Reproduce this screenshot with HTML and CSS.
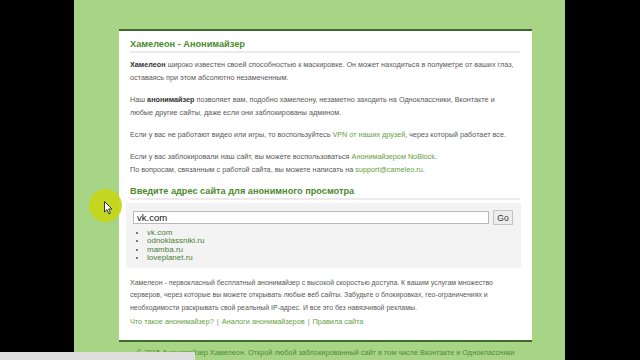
FILE: index.html
```html
<!DOCTYPE html>
<html lang="ru">
<head>
    <meta charset="UTF-8">
    <meta name="viewport" content="width=device-width, initial-scale=1.0">
    <title>Хамелеон - Анонимайзер</title>
    <link rel="stylesheet" href="styles.css">
</head>
<body>
    <div id="frame">
        <div id="page">
            <div class="hd">Хамелеон - Анонимайзер</div>
            <p class="txt"><b>Хамелеон</b> широко известен своей способностью к маскировке. Он может находиться в полуметре от ваших глаз,<br>оставаясь при этом абсолютно незамеченным.</p>
            <p class="txt">Наш <b>анонимайзер</b> позволяет вам, подобно хамелеону, незаметно заходить на Одноклассники, Вконтакте и<br>любые другие сайты, даже если они заблокированы админом.</p>
            <p class="txt">Если у вас не работают видео или игры, то воспользуйтесь <a href="#">VPN от наших друзей</a>, через который работает все.</p>
            <p class="txt">Если у вас заблокировали наш сайт, вы можете воспользоваться <a href="#">Анонимайзером NoBlock</a>.<br>По вопросам, связанным с работой сайта, вы можете написать на <a href="#">support@cameleo.ru</a>.</p>

            <div class="hd hd2">Введите адрес сайта для анонимного просмотра</div>
            <div id="box">
                <div class="row">
                    <input type="text" id="url" value="vk.com">
                    <button id="go">Go</button>
                </div>
                <ul id="sites">
                    <li><a href="#">vk.com</a></li>
                    <li><a href="#">odnoklassniki.ru</a></li>
                    <li><a href="#">mamba.ru</a></li>
                    <li><a href="#">loveplanet.ru</a></li>
                </ul>
            </div>

            <p class="txt last">Хамелеон - первокласный бесплатный анонимайзер с высокой скоростью доступа. К вашим услугам множество<br>серверов, через которые вы можете открывать любые веб сайты. Забудьте о блокировках, гео-ограничениях и<br>необходимости раскрывать свой реальный IP-адрес. И все это без навязчивой рекламы.</p>
            <div class="links">
                <a href="#">Что такое анонимайзер?</a> <span class="sep">|</span>
                <a href="#">Аналоги анонимайзеров</a> <span class="sep">|</span>
                <a href="#">Правила сайта</a>
            </div>
        </div>
        <div id="copy">© 2015 Анонимайзер Хамелеон. Открой любой заблокированный сайт в том числе Вконтакте и Одноклассники</div>
    </div>

    <div id="spot"></div>
    <svg id="cursor" width="9" height="14" viewBox="0 0 9 14">
        <path d="M0.5 0.5 L0.5 11 L3 8.6 L4.8 12.8 L6.4 12.1 L4.7 8 L8 8 Z" fill="#fff" stroke="#333" stroke-width="1"/>
    </svg>
    <div id="bar"></div>
</body>
</html>
```

FILE: styles.css
```css
body{
    margin: 0;
    background: #000;
    height: 360px;
    overflow: hidden;
    font-family: "Liberation Sans", Arial, sans-serif;
}
#frame{
    width: 491px;
    height: 360px;
    margin-left: 74px;
    background: #a7d585;
    padding-top: 29px;
    box-sizing: border-box;
}
#page{
    width: 413px;
    margin-left: 45px;
    box-sizing: border-box;
    background: #fff;
    border-top: 2px solid #3f6a2d;
    border-bottom: 2px solid #3f6a2d;
    padding: 7px 12px 12px 11px;
}
.hd{
    font-size: 9.2px;
    font-weight: bold;
    color: #4c8b2e;
    line-height: 13px;
    border-bottom: 2px solid #ebebeb;
}
.hd2{
    margin-top: 8px;
    line-height: 14px;
}
.txt{
    margin: 5px 0 0 0;
    font-size: 7.25px;
    line-height: 13px;
    color: #595959;
    white-space: nowrap;
}
.txt + .txt{
    margin-top: 9px;
}
.txt b{
    color: #333;
}
a{
    color: #62a242;
    text-decoration: none;
}
#box{
    background: #f3f3f3;
    margin: 3px -1px 0 -4px;
    padding: 8px 8px 5px 7px;
}
.row{
    display: flex;
    gap: 4px;
}
#url{
    width: 356px;
    height: 13px;
    box-sizing: border-box;
    border: 1px solid #b9b9b9;
    padding: 0 3px;
    font-family: "Liberation Sans", Arial, sans-serif;
    font-size: 9.5px;
    color: #111;
    margin: 0;
}
#go{
    width: 20px;
    height: 15px;
    margin-top: -1px;
    box-sizing: border-box;
    border: 1px solid #c4c4c4;
    background: #ececec;
    padding: 0;
    font-family: "Liberation Sans", Arial, sans-serif;
    font-size: 8.5px;
    color: #333;
}
#sites{
    margin: 4px 0 0 0;
    padding-left: 14px;
    font-size: 8px;
    line-height: 8.4px;
}
#sites li{
    color: #555;
}
#sites a{
    color: #4a7f35;
}
.last{
    margin-top: 9px;
    line-height: 12.5px;
    font-size: 6.95px;
}
.links{
    margin-top: 1px;
    font-size: 7.3px;
    line-height: 13px;
    color: #888;
}
.sep{
    margin: 0 1px;
}
#copy{
    width: 413px;
    margin: 5px 0 0 45px;
    text-align: center;
    font-size: 7.3px;
    line-height: 12px;
    color: #4f8a36;
    white-space: nowrap;
}
#spot{
    position: absolute;
    left: 89px;
    top: 189px;
    width: 33px;
    height: 33px;
    border-radius: 50%;
    background: rgba(200, 214, 20, 0.9);
}
#cursor{
    position: absolute;
    left: 104px;
    top: 201px;
}
#bar{
    position: absolute;
    left: 0;
    top: 352px;
    width: 195px;
    height: 8px;
    background: #dedede;
}
```
